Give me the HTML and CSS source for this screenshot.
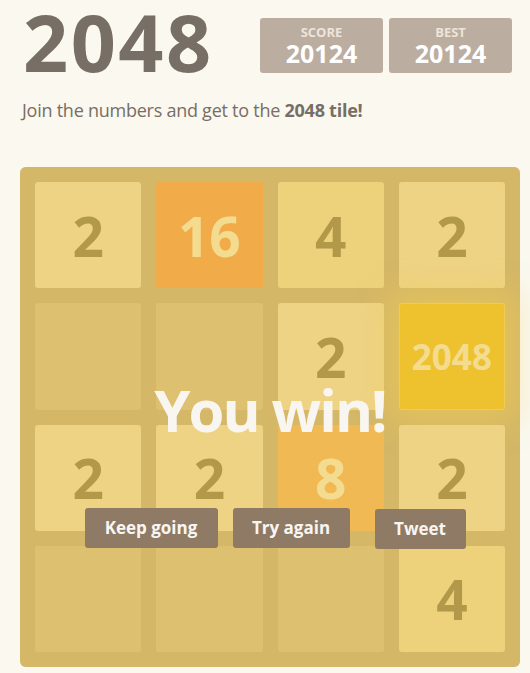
FILE: index.html
```html
<!DOCTYPE html>
<html lang="en">
<head>
    <meta charset="utf-8">
    <meta name="viewport" content="width=device-width, initial-scale=1">
    <title>2048</title>
    <link rel="stylesheet" href="styles.css">
</head>
<body>

<div class="container">
    <div class="heading">
        <h1 class="title">2048</h1>
        <div class="scores">
            <div class="score-box">
                <span class="label">SCORE</span>
                <span class="value">20124</span>
            </div>
            <div class="score-box">
                <span class="label">BEST</span>
                <span class="value">20124</span>
            </div>
        </div>
    </div>

    <p class="intro">Join the numbers and get to the <strong>2048 tile!</strong></p>

    <div class="game">
        <div class="grid">
            <div class="cell tile-2">2</div>
            <div class="cell tile-16">16</div>
            <div class="cell tile-4">4</div>
            <div class="cell tile-2">2</div>

            <div class="cell"></div>
            <div class="cell"></div>
            <div class="cell tile-2">2</div>
            <div class="cell tile-2048">2048</div>

            <div class="cell tile-2">2</div>
            <div class="cell tile-2">2</div>
            <div class="cell tile-8">8</div>
            <div class="cell tile-2">2</div>

            <div class="cell"></div>
            <div class="cell"></div>
            <div class="cell"></div>
            <div class="cell tile-4">4</div>
        </div>

        <div class="game-message">
            <p>You win!</p>
            <div class="lower">
                <a href="#" class="button keep">Keep going</a>
                <a href="#" class="button retry">Try again</a>
                <a href="#" class="button tweet">Tweet</a>
            </div>
        </div>
    </div>
</div>

</body>
</html>
```

FILE: styles.css
```css
body {
    margin: 0;
    background: #faf8ef;
    color: #776e65;
    font-family: "Open Sans", "Noto Sans", sans-serif;
}

.container {
    width: 500px;
    margin-left: 20px;
}

.heading {
    display: flex;
    justify-content: space-between;
    align-items: flex-start;
}

.title {
    margin: 0;
    font-size: 79px;
    line-height: 84px;
    letter-spacing: 2.5px;
    font-weight: bold;
    padding-left: 3px;
}

.scores {
    display: flex;
    gap: 6px;
    margin-top: 18px;
    margin-right: 8px;
}

.score-box {
    width: 123px;
    height: 55px;
    background: #bbada0;
    border-radius: 3px;
    display: flex;
    flex-direction: column;
    align-items: center;
    box-sizing: border-box;
    padding-top: 7px;
}

.score-box .label {
    font-size: 13px;
    line-height: 14px;
    font-weight: bold;
    color: #eee4da;
}

.score-box .value {
    font-size: 25px;
    line-height: 28px;
    font-weight: bold;
    color: #ffffff;
}

.intro {
    margin: 15px 0 0;
    padding-left: 2px;
    font-size: 18px;
    line-height: 22px;
    letter-spacing: -0.25px;
}

.game {
    position: relative;
    margin-top: 46px;
    background: #bbada0;
    border-radius: 6px;
    width: 500px;
    height: 500px;
    box-sizing: border-box;
    padding: 15px;
}

.grid {
    display: grid;
    grid-template-columns: repeat(4, 106.25px);
    grid-template-rows: repeat(4, 106.25px);
    gap: 15px;
}

.cell {
    border-radius: 3px;
    background: rgba(238, 228, 218, 0.35);
    display: flex;
    align-items: center;
    justify-content: center;
    font-size: 55px;
    font-weight: bold;
}

.tile-2 {
    background: #eee4da;
    color: #776e65;
}

.tile-4 {
    background: #ede0c8;
    color: #776e65;
}

.tile-8 {
    background: #f2b179;
    color: #f9f6f2;
}

.tile-16 {
    background: #f59563;
    color: #f9f6f2;
}

.tile-2048 {
    background: #edc22e;
    color: #f9f6f2;
    font-size: 35px;
    box-shadow: 0 0 30px 10px rgba(243, 215, 116, 0.55), inset 0 0 0 1px rgba(255, 255, 255, 0.33);
}

.game-message {
    position: absolute;
    top: 0;
    left: 0;
    right: 0;
    bottom: 0;
    background: rgba(237, 194, 46, 0.5);
    border-radius: 6px;
    text-align: center;
    color: #f9f6f2;
}

.game-message p {
    margin: 213px 0 0;
    font-size: 58px;
    line-height: 60px;
    letter-spacing: -2px;
    font-weight: bold;
}

.game-message .lower {
    display: flex;
    justify-content: center;
    margin-top: 68px;
    padding-left: 10px;
}

.button {
    display: block;
    box-sizing: border-box;
    height: 40px;
    line-height: 40px;
    background: #8f7a66;
    border-radius: 3px;
    color: #f9f6f2;
    text-decoration: none;
    font-size: 17px;
    font-weight: bold;
}

.button.keep {
    width: 133px;
}

.button.retry {
    width: 117px;
    margin-left: 15px;
}

.button.tweet {
    width: 91px;
    margin-left: 25px;
    margin-top: 1px;
}
```
